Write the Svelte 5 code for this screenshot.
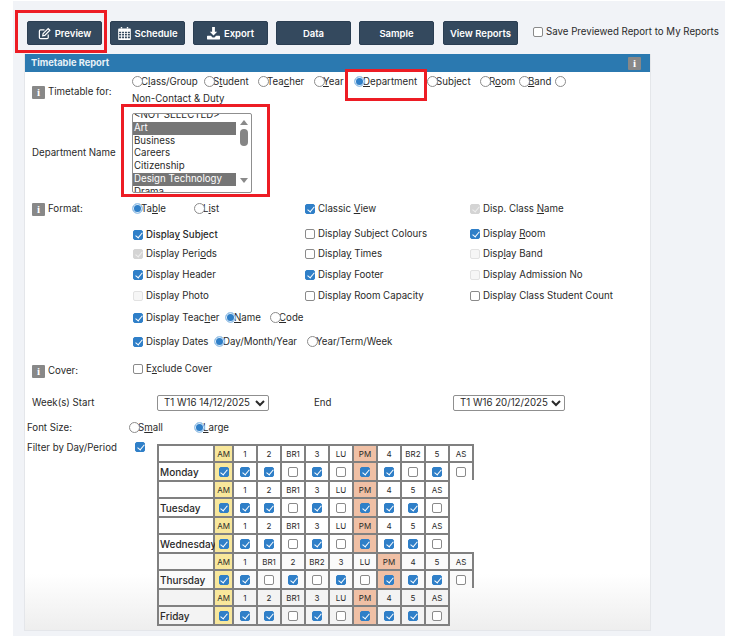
<script>
  const departments = [
    { name: '<NOT SELECTED>' },
    { name: 'Art', selected: true },
    { name: 'Business' },
    { name: 'Careers' },
    { name: 'Citizenship' },
    { name: 'Design Technology', selected: true },
    { name: 'Drama' }
  ]

  const standard = ['AM', '1', '2', 'BR1', '3', 'LU', 'PM', '4', '5', 'AS']
  const days = [
    { name: 'Monday', periods: ['AM', '1', '2', 'BR1', '3', 'LU', 'PM', '4', 'BR2', '5', 'AS'], shade: '' },
    { name: 'Tuesday', periods: standard, shade: '' },
    { name: 'Wednesday', periods: standard, shade: '' },
    { name: 'Thursday', periods: ['AM', '1', 'BR1', '2', 'BR2', '3', 'LU', 'PM', '4', '5', 'AS'], shade: 'fade' },
    { name: 'Friday', periods: standard, shade: 'shaded' }
  ]

  const isOff = (p) => p.startsWith('BR') || p === 'LU' || p === 'AS'
  const tint = (p) => (p === 'AM' ? 'am' : p === 'PM' ? 'pm' : '')
</script>

<main>
  <div class="toolbar">
    <button>
      <svg viewBox="0 0 14 14" width="13" height="13" fill="none" stroke="currentColor" stroke-width="1.3">
        <path d="M11 8v3.2a1.3 1.3 0 0 1-1.3 1.3H2.8a1.3 1.3 0 0 1-1.3-1.3V4.3A1.3 1.3 0 0 1 2.8 3H7" />
        <path d="M5.5 7.2 11 1.7l1.8 1.8-5.5 5.5-2.2.4z" />
      </svg>
      Preview
    </button>
    <button>
      <svg viewBox="0 0 14 14" width="13" height="13" fill="currentColor">
        <path d="M3 0h1.5v2H3zM9.500 0H11v2H9.500zM1 1.500h12a.8.8 0 0 1 .8.8v10.900a.8.8 0 0 1-.8.8H1a.8.8 0 0 1-.8-.8V2.300a.8.8 0 0 1 .8-.8zm.2 3.500v1.600h2.200V5zm3.200 0v1.600h2.100V5zm3.100 0v1.600h2.100V5zm3.100 0v1.600h2.200V5zM1.200 7.600v1.600h2.200V7.600zm3.200 0v1.600h2.100V7.600zm3.100 0v1.600h2.100V7.600zm3.100 0v1.600h2.200V7.600zM1.200 10.200v1.800h2.200v-1.800zm3.200 0v1.800h2.100v-1.800zm3.100 0v1.800h2.100v-1.800zm3.100 0v1.800h2.200v-1.800z" fill-rule="evenodd" />
      </svg>
      Schedule
    </button>
    <button>
      <svg viewBox="0 0 14 14" width="13" height="13" fill="currentColor">
        <path d="M5.500 0h3v5h2.500L7 9.200 3 5h2.500z" />
        <path d="M0.500 9.500h3.700L6 11.200h2l1.800-1.700h3.700a.5.500 0 0 1 .5.500v3a.5.500 0 0 1-.5.500h-13A.5.500 0 0 1 0 13v-3a.5.500 0 0 1 .5-.5z" />
      </svg>
      Export
    </button>
    <button>Data</button>
    <button class="sample">Sample</button>
    <button>View Reports</button>
    <label class="opt save"><input type="checkbox" />Save Previewed Report to My Reports</label>
  </div>

  <section class="panel">
    <header>
      <span>Timetable Report</span>
      <span class="info">i</span>
    </header>

    <div class="pick">
      <div class="label with-info"><span class="info">i</span>Timetable for:</div>
      <div class="radios">
        <label class="opt"><input type="radio" name="kind" />C<u>l</u>ass/Group</label>
        <label class="opt"><input type="radio" name="kind" />S<u>t</u>udent</label>
        <label class="opt"><input type="radio" name="kind" />Tea<u>c</u>her</label>
        <label class="opt"><input type="radio" name="kind" /><u>Y</u>ear</label>
        <label class="opt"><input type="radio" name="kind" checked /><u>D</u>epartment</label>
        <label class="opt"><input type="radio" name="kind" />Subject</label>
        <label class="opt"><input type="radio" name="kind" />R<u>o</u>om</label>
        <label class="opt"><input type="radio" name="kind" /><u>B</u>and</label>
        <label class="opt"><input type="radio" name="kind" /></label>
        <span class="wrapped">Non-Contact &amp; Duty</span>
      </div>
    </div>

    <div class="dept">
      <div class="label">Department Name</div>
      <div class="listbox" role="listbox">
        <div class="items">
          {#each departments as d}
            <div class="item" class:selected={d.selected}>{d.name}</div>
          {/each}
        </div>
        <div class="scroll">
          <i class="up"></i>
          <i class="thumb"></i>
          <i class="down"></i>
        </div>
      </div>
    </div>

    <div class="format">
      <div class="label with-info"><span class="info">i</span>Format:</div>
      <div class="pair">
        <label class="opt"><input type="radio" name="layout" checked />Ta<u>b</u>le</label>
        <label class="opt"><input type="radio" name="layout" />L<u>i</u>st</label>
      </div>
      <label class="opt"><input type="checkbox" checked />Classic <u>V</u>iew</label>
      <label class="opt"><input type="checkbox" checked disabled />Disp. Class <u>N</u>ame</label>

      <span></span>
      <label class="opt low heavy"><input type="checkbox" checked />Displa<u>y</u> Subject</label>
      <label class="opt"><input type="checkbox" />Display Subject Colours</label>
      <label class="opt"><input type="checkbox" checked />Display <u>R</u>oom</label>

      <span></span>
      <label class="opt"><input type="checkbox" checked disabled />Display Peri<u>o</u>ds</label>
      <label class="opt"><input type="checkbox" />Displa<u>y</u> Times</label>
      <label class="opt"><input type="checkbox" disabled />Disp<u>l</u>ay Band</label>

      <span></span>
      <label class="opt"><input type="checkbox" checked />Display Header</label>
      <label class="opt"><input type="checkbox" checked />Display Footer</label>
      <label class="opt"><input type="checkbox" disabled />Display Admission No</label>

      <span></span>
      <label class="opt"><input type="checkbox" disabled />Display Photo</label>
      <label class="opt"><input type="checkbox" />Display Room Capacity</label>
      <label class="opt"><input type="checkbox" />Display Class Student Count</label>

      <span></span>
      <div class="wide">
        <label class="opt teacher"><input type="checkbox" checked />Display Teac<u>h</u>er</label>
        <label class="opt who"><input type="radio" name="who" checked /><u>N</u>ame</label>
        <label class="opt"><input type="radio" name="who" /><u>C</u>ode</label>
      </div>

      <span></span>
      <div class="wide">
        <label class="opt dates"><input type="checkbox" checked />Display Dates</label>
        <label class="opt dmy"><input type="radio" name="date" checked />Day/Month/Year</label>
        <label class="opt"><input type="radio" name="date" />Year/Term/Week</label>
      </div>
    </div>

    <div class="cover">
      <div class="label with-info"><span class="info">i</span>Cover:</div>
      <label class="opt"><input type="checkbox" />E<u>x</u>clude Cover</label>
    </div>

    <div class="weeks">
      <div class="label">Week(s) Start</div>
      <select><option>T1 W16 14/12/2025</option></select>
      <div>End</div>
      <select><option>T1 W16 20/12/2025</option></select>
    </div>

    <div class="size">
      <div>Font Size:</div>
      <label class="opt"><input type="radio" name="size" />S<u>m</u>all</label>
      <label class="opt"><input type="radio" name="size" checked /><u>L</u>arge</label>
    </div>

    <div class="filter">
      <div>Filter by Day/Period</div>
      <input class="all" type="checkbox" checked />
      <div class="timetable">
        {#each days as day}
          <div class="day {day.shade}" style="grid-template-columns: 54px 17px repeat({day.periods.length - 1}, 22px)">
            <div class="cell"></div>
            {#each day.periods as p}
              <div class="cell head {tint(p)}">{p}</div>
            {/each}
            <div class="cell day-name">{day.name}</div>
            {#each day.periods as p}
              <div class="cell {tint(p)}"><input type="checkbox" checked={!isOff(p)} /></div>
            {/each}
          </div>
        {/each}
      </div>
    </div>
  </section>

  <div class="mark mark-preview"></div>
  <div class="mark mark-dept"></div>
  <div class="mark mark-list"></div>
</main>

<style>
  :global(body) {
    background: #fff;
  }

  main {
    box-sizing: border-box;
    position: relative;
    width: 712px;
    height: 635px;
    margin: 1px 0 0 13px;
    padding: 20px 0 0 11px;
    background: #f1f3f7;
    font-family: Inter, 'Noto Sans', sans-serif;
    font-size: 9.7px;
    line-height: 16px;
    color: #2a2a2a;
  }

  .toolbar {
    display: flex;
    gap: 8px;
    height: 33px;
    padding-left: 3px;
  }

  .toolbar button {
    display: flex;
    align-items: center;
    justify-content: center;
    gap: 4px;
    width: 75px;
    height: 24px;
    padding: 0;
    border: 1px solid #2b3e52;
    border-radius: 2px;
    background: #34495e;
    color: #fff;
    font: 600 9.5px Inter, sans-serif;
  }

  .toolbar .sample {
    margin-right: 1px;
  }

  .save {
    margin: 3px 0 0 7px;
    white-space: nowrap;
  }

  .panel {
    box-sizing: border-box;
    width: 627px;
    height: 577px;
    border: 1px solid #e4e6ea;
    border-top: 0;
    background: linear-gradient(#fff 520px, #eeeeee);
  }

  header {
    display: flex;
    align-items: center;
    justify-content: space-between;
    height: 18px;
    padding: 0 9px 0 6px;
    background: #2b79b0;
    color: #e8f1f7;
    font-weight: 700;
    font-size: 9.3px;
  }

  .info {
    display: inline-block;
    width: 13px;
    height: 13px;
    background: #888;
    color: #fff;
    border-radius: 1px;
    font: 700 11px/13px 'Liberation Serif', serif;
    text-align: center;
  }

  .label {
    padding-left: 7px;
  }

  .with-info {
    display: flex;
    align-items: center;
    gap: 3px;
  }

  .opt {
    display: inline-block;
    height: 16px;
    white-space: nowrap;
  }

  input {
    appearance: none;
    box-sizing: border-box;
    position: relative;
    width: 10px;
    height: 10px;
    margin: 0 3px 0 0;
    border: 1px solid #8a8a8a;
    border-radius: 2px;
    background: #fff;
    vertical-align: -1.500px;
  }

  input:checked {
    border-color: #2f7fc8;
    background: #2f7fc8;
  }

  input[type='checkbox']:checked::after {
    content: '';
    position: absolute;
    left: 2.500px;
    top: 0;
    width: 3px;
    height: 6px;
    border: solid #fff;
    border-width: 0 1.500px 1.500px 0;
    transform: rotate(40deg);
  }

  input:disabled {
    border-color: #e2e2e2;
    background: #f6f6f6;
  }

  input:checked:disabled {
    border-color: #d4d4d4;
    background: #d4d4d4;
  }

  input[type='checkbox']:checked:disabled::after {
    border-color: #eee;
  }

  input[type='radio'] {
    width: 11px;
    height: 11px;
    margin: 0 -2px 0 0;
    border-radius: 50%;
    border-color: #8c8c8c;
  }

  input[type='radio']:checked {
    border: 1.500px solid #a9cdec;
    background: #2f7fc8;
    box-shadow: inset 0 0 0 1px #dcebf7;
  }

  .pick {
    display: grid;
    grid-template-columns: 107px 450px;
    margin-top: 1px;
    line-height: 18px;
  }

  .pick .label {
    height: 36px;
    margin-top: 1px;
  }

  .radios {
    display: grid;
    grid-template-columns: 72px 54px 56px 40px 73px 53px 39px 36px 1fr;
    grid-template-rows: 17px 18px;
  }

  .radios .opt {
    height: 17px;
  }

  .wrapped {
    grid-column: 1 / -1;
  }

  .dept {
    display: grid;
    grid-template-columns: 107px 120px;
    align-items: center;
    margin-top: 3px;
  }

  .listbox {
    display: flex;
    box-sizing: border-box;
    height: 80px;
    overflow: hidden;
    border: 1px solid #8f8f8f;
    border-radius: 2px;
    background: #fff;
  }

  .items {
    flex: 1;
    margin-top: -5px;
    line-height: 12.800px;
  }

  .item {
    padding-left: 1px;
  }

  .selected {
    background: #767676;
    color: #fff;
  }

  .scroll {
    display: flex;
    flex-direction: column;
    align-items: center;
    width: 15px;
    padding-top: 6px;
  }

  .scroll i {
    display: block;
  }

  .up {
    border: 4px solid transparent;
    border-top: 0;
    border-bottom: 5px solid #8a8a8a;
  }

  .thumb {
    width: 8px;
    height: 17px;
    margin: 4px 0 32px;
    border-radius: 4px;
    background: #858585;
  }

  .down {
    border: 4px solid transparent;
    border-bottom: 0;
    border-top: 5px solid #8a8a8a;
  }

  .format {
    display: grid;
    grid-template-columns: 108px 172px 165px 1fr;
    grid-template-rows: 25px 20px 21px 21px 22px 24px 27px;
    margin-top: 8px;
    align-items: start;
  }

  .pair {
    display: grid;
    grid-template-columns: 62px 1fr;
    margin-left: -1px;
  }

  .low {
    transform: translateY(1px);
  }

  .heavy {
    font-weight: 500;
  }

  .wide {
    grid-column: 2 / 5;
    display: flex;
  }

  .teacher {
    width: 92px;
  }

  .who {
    width: 45px;
  }

  .dates {
    width: 81px;
  }

  .dmy {
    width: 93px;
  }

  .cover {
    display: grid;
    grid-template-columns: 108px 1fr;
    align-items: start;
    height: 29px;
  }

  .cover .label {
    margin-top: 2px;
  }

  .weeks {
    display: grid;
    grid-template-columns: 132px 157px 139px 112px;
    align-items: center;
    height: 25px;
    margin-bottom: 5px;
  }

  select {
    box-sizing: border-box;
    width: 112px;
    height: 16px;
    padding: 0 0 0 2px;
    border: 1px solid #8f8f8f;
    border-radius: 2px;
    background: #fff;
    color: #2a2a2a;
    font: 9.7px Inter, sans-serif;
  }

  .size {
    display: grid;
    grid-template-columns: 102px 65px 1fr;
    height: 20px;
    padding-left: 2px;
  }

  .filter {
    display: grid;
    grid-template-columns: 108px 22px auto;
    align-items: start;
    padding-left: 2px;
  }

  .all {
    margin: 2px 0 0;
  }

  .timetable {
    display: flex;
    flex-direction: column;
    align-items: flex-start;
    margin-top: 4px;
  }

  .day {
    display: grid;
    grid-template-rows: 15px 17px;
    gap: 2px;
    padding: 2px 2px 0;
    background: #808080;
  }

  .day:last-child {
    padding-bottom: 2px;
  }

  .cell {
    display: flex;
    align-items: center;
    justify-content: center;
    background: #fff;
  }

  .cell input {
    margin: 0;
  }

  .head {
    font-size: 8px;
  }

  .day-name {
    justify-content: flex-start;
    padding-left: 1px;
    font-size: 10px;
    font-weight: 500;
  }

  .am {
    background: #f8e79b;
  }

  .pm {
    background: #f0c0a5;
  }

  .fade .cell:not(.am, .pm) {
    background: #fafafa;
  }

  .shaded .cell:not(.am, .pm) {
    background: #f3f3f3;
  }

  .mark {
    position: absolute;
    box-sizing: border-box;
    border: 3px solid #ed1c24;
  }

  .mark-preview {
    left: 2px;
    top: 9px;
    width: 92px;
    height: 43px;
  }

  .mark-dept {
    left: 332px;
    top: 68px;
    width: 82px;
    height: 32px;
  }

  .mark-list {
    left: 108px;
    top: 103px;
    width: 149px;
    height: 93px;
  }
</style>
